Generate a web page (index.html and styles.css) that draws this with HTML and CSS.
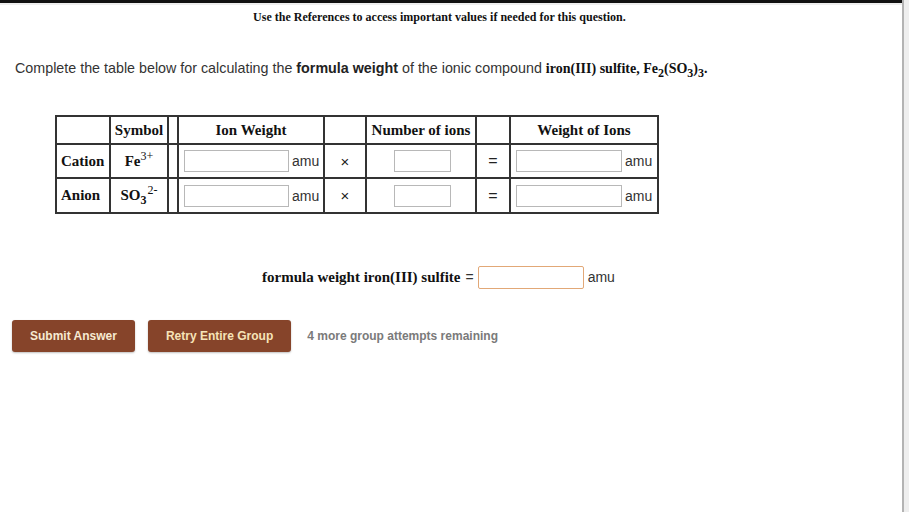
FILE: index.html
```html
<!DOCTYPE html>
<html>
<head>
<meta charset="utf-8">
<link rel="stylesheet" href="styles.css">
</head>
<body>
<div class="page">
  <div class="main">
    <div class="topbar"></div>
    <div class="topstrip"></div>
    <div class="refnote"><span class="refnote-text">Use the References to access important values if needed for this question.</span></div>
    <p class="prompt">Complete the table below for calculating the <b class="sb">formula weight</b> of the ionic compound <b class="serifb">iron(III) sulfite, Fe<sub>2</sub>(SO<sub>3</sub>)<sub>3</sub>.</b></p>
    <table class="calc">
      <colgroup>
        <col class="c1"><col class="c2"><col class="c3"><col class="c4"><col class="c5"><col class="c6"><col class="c7"><col class="c8">
      </colgroup>
      <tr class="hrow">
        <th></th>
        <th>Symbol</th>
        <th></th>
        <th>Ion Weight</th>
        <th></th>
        <th>Number of ions</th>
        <th></th>
        <th>Weight of Ions</th>
      </tr>
      <tr class="drow">
        <td class="lbl">Cation</td>
        <td class="sym">Fe<sup>3+</sup></td>
        <td></td>
        <td class="inp"><span class="box wide"></span><span class="unit">amu</span></td>
        <td class="op">&times;</td>
        <td class="mid"><span class="box narrow"></span></td>
        <td class="op eq">=</td>
        <td class="inp"><span class="box wide2"></span><span class="unit">amu</span></td>
      </tr>
      <tr class="drow r2">
        <td class="lbl">Anion</td>
        <td class="sym">SO<sub>3</sub><sup class="neg">2-</sup></td>
        <td></td>
        <td class="inp"><span class="box wide"></span><span class="unit">amu</span></td>
        <td class="op">&times;</td>
        <td class="mid"><span class="box narrow"></span></td>
        <td class="op eq">=</td>
        <td class="inp"><span class="box wide2"></span><span class="unit">amu</span></td>
      </tr>
    </table>
    <div class="fw">
      <span class="fw-label">formula weight iron(III) sulfite</span>
      <span class="fw-eq">=</span>
      <span class="box fw-box"></span>
      <span class="unit">amu</span>
    </div>
    <div class="actions">
      <button class="btn">Submit Answer</button>
      <button class="btn btn-retry">Retry Entire Group</button>
      <span class="remaining">4 more group attempts remaining</span>
    </div>
  </div>
  <div class="scrollbar"></div>
</div>
</body>
</html>
```
FILE: styles.css
```css
html, body {
  margin: 0;
  padding: 0;
  background: #ffffff;
}
.page {
  display: flex;
  width: 909px;
  height: 512px;
  overflow: hidden;
}
.main {
  width: 902px;
  flex: none;
}
.scrollbar {
  width: 7px;
  flex: none;
  background: #eeeeee;
  border-left: 2px solid #b3b3b3;
  box-sizing: border-box;
}
.topbar {
  height: 3px;
  background: #111111;
}
.topstrip {
  height: 2px;
  background: #eeeeee;
}
.refnote {
  height: 22px;
  margin-top: 3px;
  text-align: center;
  line-height: 16px;
}
.refnote-text {
  display: inline-block;
  font-family: "Liberation Serif", serif;
  font-weight: bold;
  font-size: 13.5px;
  color: #111;
  transform: scaleX(0.89);
  transform-origin: 50% 50%;
  white-space: nowrap;
  position: relative;
  left: -12px;
}
.prompt {
  margin: 29px 0 0 15px;
  font-family: "Liberation Sans", Arial, sans-serif;
  font-size: 14.3px;
  color: #333;
  line-height: 18px;
}
.prompt .sb {
  color: #222;
}
.serifb {
  font-family: "Liberation Serif", serif;
  font-size: 14px;
  color: #111;
}
.serifb sub {
  font-size: 12px;
  vertical-align: -4px;
  line-height: 0;
}
.calc {
  margin: 37px 0 0 55px;
  border-collapse: collapse;
  table-layout: fixed;
  width: 604px;
  font-family: "Liberation Serif", serif;
  color: #111;
}
.calc th, .calc td {
  border: 2px solid #333;
  padding: 0;
}
.c1 { width: 54px; }
.c2 { width: 58px; }
.c3 { width: 10px; }
.c4 { width: 146px; }
.c5 { width: 42px; }
.c6 { width: 110px; }
.c7 { width: 34px; }
.c8 { width: 148px; }
.hrow {
  height: 28px;
}
.hrow th {
  font-size: 15px;
  font-weight: bold;
  text-align: center;
}
.drow {
  height: 34px;
}
.drow.r2 {
  height: 35px;
}
.lbl {
  font-size: 15px;
  font-weight: bold;
  padding-left: 4px !important;
}
.sym {
  font-size: 15px;
  font-weight: bold;
  text-align: center;
}
.sym sup {
  font-size: 12px;
  font-weight: normal;
  vertical-align: 6px;
  line-height: 0;
}
.sym sub {
  font-size: 12px;
  vertical-align: -4px;
  line-height: 0;
}
.sym sup.neg {
  vertical-align: 6px;
  margin-left: 1px;
}
.inp {
  padding-left: 5px !important;
  white-space: nowrap;
}
.box {
  display: inline-block;
  height: 22px;
  box-sizing: border-box;
  border: 1px solid #b8b8b8;
  background: #fff;
  vertical-align: middle;
}
.wide { width: 105px; }
.wide2 { width: 106px; }
.narrow { width: 57px; }
.unit {
  font-family: "Liberation Sans", Arial, sans-serif;
  font-size: 14px;
  color: #333;
  margin-left: 3px;
  vertical-align: middle;
}
.op {
  text-align: center;
  font-family: "Liberation Sans", Arial, sans-serif;
  font-size: 15px;
  color: #222;
}
.op.eq {
  font-size: 16px;
}
.mid {
  text-align: center;
  padding-left: 3px !important;
}
.fw {
  margin: 51px 0 0 262px;
  display: flex;
  align-items: center;
  height: 24px;
}
.fw-label {
  font-family: "Liberation Serif", serif;
  font-weight: bold;
  font-size: 15px;
  color: #111;
}
.fw-eq {
  font-family: "Liberation Sans", Arial, sans-serif;
  font-size: 14px;
  color: #333;
  margin: 0 4px 0 5px;
}
.fw-box {
  width: 106px;
  height: 23px;
  border: 1px solid #e2a877;
  border-radius: 2px;
}
.fw .unit {
  margin-left: 4px;
}
.actions {
  margin: 31px 0 0 12px;
  display: flex;
  align-items: center;
  gap: 13px;
}
.btn {
  height: 32px;
  padding: 0 18px;
  border: none;
  border-radius: 3px;
  background: #86442a;
  color: #f7ead2;
  font-family: "Liberation Sans", Arial, sans-serif;
  font-weight: bold;
  font-size: 12px;
  box-shadow: 0 1px 2px rgba(0,0,0,0.25);
}
.btn-retry {
  color: #f6e3b8;
}
.remaining {
  margin-left: 3px;
  font-family: "Liberation Sans", Arial, sans-serif;
  font-weight: bold;
  font-size: 12px;
  color: #7a7a7a;
}
```
